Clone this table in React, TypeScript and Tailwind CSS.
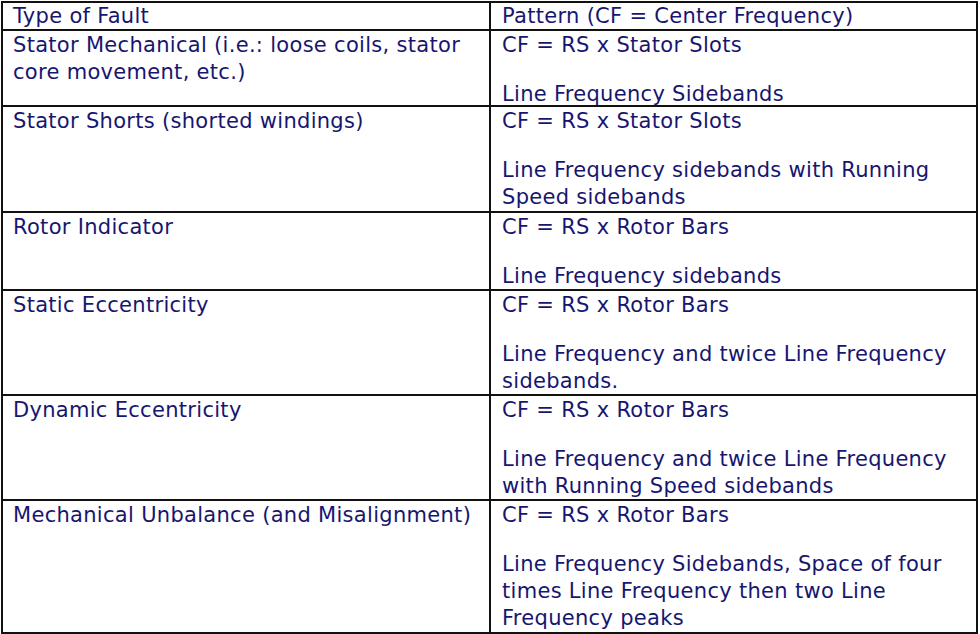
const rows: { fault: string[]; cf: string; pattern: string[]; h: string }[] = [
  {
    fault: ["Stator Mechanical (i.e.: loose coils, stator", "core movement, etc.)"],
    cf: "CF = RS x Stator Slots",
    pattern: ["Line Frequency Sidebands"],
    h: "h-[76px]",
  },
  {
    fault: ["Stator Shorts (shorted windings)"],
    cf: "CF = RS x Stator Slots",
    pattern: ["Line Frequency sidebands with Running", "Speed sidebands"],
    h: "h-[106px]",
  },
  {
    fault: ["Rotor Indicator"],
    cf: "CF = RS x Rotor Bars",
    pattern: ["Line Frequency sidebands"],
    h: "h-[78px]",
  },
  {
    fault: ["Static Eccentricity"],
    cf: "CF = RS x Rotor Bars",
    pattern: ["Line Frequency and twice Line Frequency", "sidebands."],
    h: "h-[105px]",
  },
  {
    fault: ["Dynamic Eccentricity"],
    cf: "CF = RS x Rotor Bars",
    pattern: ["Line Frequency and twice Line Frequency", "with Running Speed sidebands"],
    h: "h-[105px]",
  },
  {
    fault: ["Mechanical Unbalance (and Misalignment)"],
    cf: "CF = RS x Rotor Bars",
    pattern: [
      "Line Frequency Sidebands, Space of four",
      "times Line Frequency then two Line",
      "Frequency peaks",
    ],
    h: "h-[131px]",
  },
];

function Lines({ items }: { items: string[] }) {
  return (
    <>
      {items.map((t) => (
        <div key={t} className="whitespace-nowrap">
          {t}
        </div>
      ))}
    </>
  );
}

export default function App() {
  return (
    <div className="h-[634px] w-[980px] overflow-hidden bg-white pt-px">
      <div
        className="ml-px w-[977px] border-2 border-[#111] text-[21px] leading-[27px] tracking-[0.3px] text-[#17166f]"
        style={{ fontFamily: '"DejaVu Sans", Verdana, sans-serif' }}
      >
        {/* header */}
        <div className="grid h-[28px] grid-cols-[488px_1fr] border-b-2 border-[#111]">
          <div className="border-r-2 border-[#111] pl-[10px] leading-[26px]">Type of Fault</div>
          <div className="pl-[11px] leading-[26px]">Pattern (CF = Center Frequency)</div>
        </div>

        {rows.map((r, i) => (
          <div
            key={i}
            className={`grid grid-cols-[488px_1fr] ${r.h} ${i < rows.length - 1 ? "border-b-2 border-[#111]" : ""}`}
          >
            <div className="border-r-2 border-[#111] pl-[10px] pt-px">
              <Lines items={r.fault} />
            </div>
            <div className="pl-[11px] pt-px">
              <div className="whitespace-nowrap">{r.cf}</div>
              <div className="h-[22px]" />
              <Lines items={r.pattern} />
            </div>
          </div>
        ))}
      </div>
    </div>
  );
}
